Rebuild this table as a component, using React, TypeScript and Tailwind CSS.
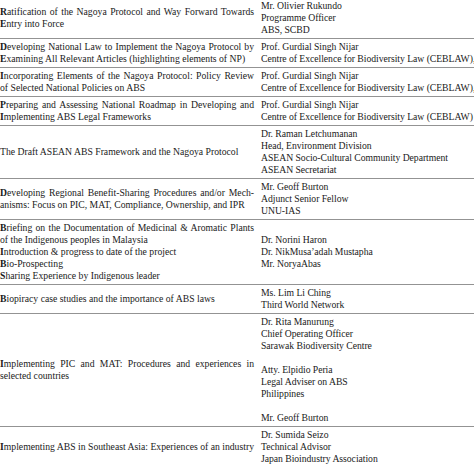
type Line = { text: string; justify?: boolean; lead?: boolean; tight?: boolean };

type Row = { left: Line[]; right: string[] };

const rows: Row[] = [
  {
    left: [
      { text: "Ratification of the Nagoya Protocol and Way Forward Towards", justify: true, lead: true },
      { text: "Entry into Force", lead: true },
    ],
    right: ["Mr. Olivier Rukundo", "Programme Officer", "ABS, SCBD"],
  },
  {
    left: [
      { text: "Developing National Law to Implement the Nagoya Protocol by", justify: true, lead: true },
      { text: "Examining All Relevant Articles (highlighting elements of NP)", lead: true },
    ],
    right: ["Prof. Gurdial Singh Nijar", "Centre of Excellence for Biodiversity Law (CEBLAW),"],
  },
  {
    left: [
      { text: "Incorporating Elements of the Nagoya Protocol: Policy Review", justify: true, lead: true },
      { text: "of Selected National Policies on ABS" },
    ],
    right: ["Prof. Gurdial Singh Nijar", "Centre of Excellence for Biodiversity Law (CEBLAW),"],
  },
  {
    left: [
      { text: "Preparing and Assessing National Roadmap in Developing and", justify: true, lead: true },
      { text: "Implementing ABS Legal Frameworks", lead: true },
    ],
    right: ["Prof. Gurdial Singh Nijar", "Centre of Excellence for Biodiversity Law (CEBLAW)"],
  },
  {
    left: [{ text: "The Draft ASEAN ABS Framework and the Nagoya Protocol" }],
    right: [
      "Dr. Raman Letchumanan",
      "Head, Environment Division",
      "ASEAN Socio-Cultural Community Department",
      "ASEAN Secretariat",
    ],
  },
  {
    left: [
      { text: "Developing Regional Benefit-Sharing Procedures and/or Mech-", justify: true, lead: true },
      { text: "anisms: Focus on PIC, MAT, Compliance, Ownership, and IPR" },
    ],
    right: ["Mr. Geoff Burton", "Adjunct Senior Fellow", "UNU-IAS"],
  },
  {
    left: [
      { text: "Briefing on the Documentation of Medicinal & Aromatic Plants", justify: true, lead: true },
      { text: "of the Indigenous peoples in Malaysia" },
      { text: "Introduction & progress to date of the project", lead: true },
      { text: "Bio-Prospecting", lead: true },
      { text: "Sharing Experience by Indigenous leader", lead: true },
    ],
    right: ["Dr. Norini Haron", "Dr. NikMusa’adah Mustapha", "Mr. NoryaAbas"],
  },
  {
    left: [{ text: "Biopiracy case studies and the importance of ABS laws", lead: true }],
    right: ["Ms. Lim Li Ching", "Third World Network"],
  },
  {
    left: [
      { text: "Implementing PIC and MAT: Procedures and experiences in", justify: true, lead: true },
      { text: "selected countries" },
    ],
    right: [
      "Dr. Rita Manurung",
      "Chief Operating Officer",
      "Sarawak Biodiversity Centre",
      "",
      "Atty. Elpidio Peria",
      "Legal Adviser on ABS",
      "Philippines",
      "",
      "Mr. Geoff Burton",
    ],
  },
  {
    left: [
      {
        text: "Implementing ABS in Southeast Asia: Experiences of an industry",
        justify: true,
        lead: true,
        tight: true,
      },
    ],
    right: ["Dr. Sumida Seizo", "Technical Advisor", "Japan Bioindustry Association"],
  },
];

const LeftLine = ({ line }: { line: Line }) => (
  <div
    className={
      "h-[12px] whitespace-nowrap " +
      (line.justify ? "text-justify [text-align-last:justify] " : "") +
      (line.tight ? "[word-spacing:-1.2px]" : "")
    }
  >
    {line.lead ? (
      <>
        <span className="font-bold">{line.text[0]}</span>
        {line.text.slice(1)}
      </>
    ) : (
      line.text
    )}
  </div>
);

export default function App() {
  return (
    <div className="h-[467px] w-[474px] overflow-hidden bg-white font-['Liberation_Serif',serif] text-[9.7px] leading-[12px] text-[#1a1a1a]">
      {rows.map((row, i) => (
        <div
          key={i}
          className={
            "flex " +
            (i === 0 ? "pb-[2px] " : "py-[2px] ") +
            (i < rows.length - 1 ? "border-b border-[#939393]" : "")
          }
        >
          <div className="flex w-[254px] shrink-0 flex-col justify-center">
            {row.left.map((l, j) => (
              <LeftLine key={j} line={l} />
            ))}
          </div>
          <div className="ml-[7px] flex flex-col justify-center tracking-[-0.04px]">
            {row.right.map((r, j) => (
              <div key={j} className="h-[12px] whitespace-nowrap">
                {r}
              </div>
            ))}
          </div>
        </div>
      ))}
    </div>
  );
}
